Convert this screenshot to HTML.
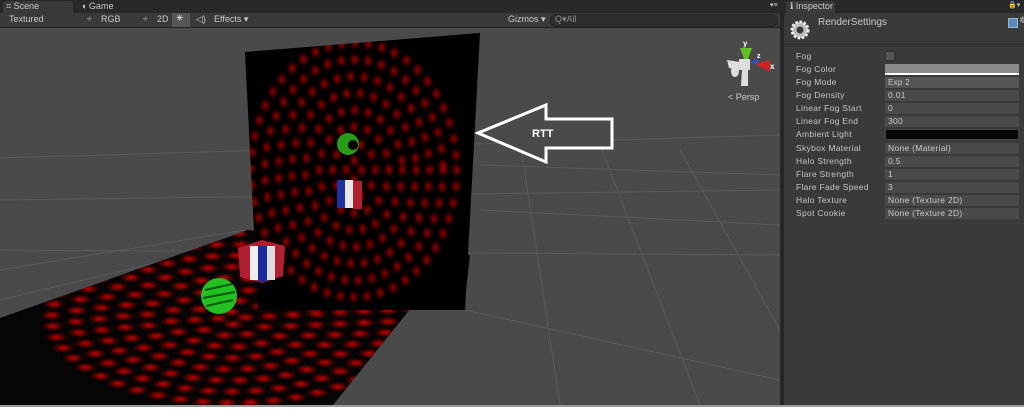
<!DOCTYPE html>
<html><head><style>
body{margin:0;width:1024px;height:420px;background:#fff;overflow:hidden;font-family:"Liberation Sans",sans-serif;position:relative}
.t{position:absolute;font-size:9px;color:#c8c8c8;white-space:nowrap}
#tabs{position:absolute;left:0;top:0;width:1024px;height:13px;background:#292929}
#tb{position:absolute;left:0;top:13px;width:782px;height:14px;background:#3a3a3a;border-bottom:1px solid #222}
#insp{position:absolute;left:782px;top:13px;width:242px;height:392px;background:#3a3a3a;border-left:2px solid #262626}
.lab{position:absolute;left:12px;font-size:8.5px;color:#c4c4c4;letter-spacing:.3px}
.fld{position:absolute;left:101px;width:134px;height:11px;background:#4a4a4a;font-size:8.5px;color:#c8c8c8;line-height:11px;padding-left:3px;box-sizing:border-box;letter-spacing:.3px}
</style></head><body>
<div id="tabs">
 <div style="position:absolute;left:3px;top:1px;width:70px;height:13px;background:#3a3a3a;border-radius:3px 3px 0 0"></div>
 <div class="t" style="left:6px;top:1px;font-size:9px">⌗ Scene</div>
 <div class="t" style="left:81px;top:1px;">◖ Game</div>
 <div style="position:absolute;left:786px;top:1px;width:49px;height:13px;background:#3a3a3a;border-radius:3px 3px 0 0"></div>
 <div class="t" style="left:790px;top:1px;">ℹ Inspector</div>
 <div class="t" style="left:770px;top:1px;font-size:7px">▾≡</div>
 <div class="t" style="left:1008px;top:1px;font-size:7px">🔒▾</div>
</div>
<div id="tb">
 <div class="t" style="left:9px;top:1px">Textured</div><div class="t" style="left:87px;top:1px">÷</div>
 <div class="t" style="left:101px;top:1px">RGB</div><div class="t" style="left:143px;top:1px">÷</div>
 <div class="t" style="left:157px;top:1px">2D</div>
 <div style="position:absolute;left:172px;top:0;width:18px;height:14px;background:#555"></div>
 <div class="t" style="left:176px;top:0px;color:#fff">✳</div>
 <div class="t" style="left:196px;top:1px">◁)</div>
 <div class="t" style="left:214px;top:1px">Effects ▾</div>
 <div class="t" style="left:508px;top:1px">Gizmos ▾</div>
 <div style="position:absolute;left:550px;top:1px;width:226px;height:11px;background:#2e2e2e;border-radius:6px;border:1px solid #252525"></div>
 <div class="t" style="left:555px;top:1px;color:#888">Q▾All</div>
</div>
<svg style="position:absolute;left:0;top:28px" width="780" height="377" viewBox="0 28 780 377">
<defs>
 <filter id="bl" x="-20%" y="-20%" width="140%" height="140%"><feGaussianBlur stdDeviation="2"/></filter>
 <clipPath id="fc"><polygon points="0,318 248,230 470,255 465,300 415,303 333,405 0,405"/></clipPath>
 <clipPath id="pc"><polygon points="245,52 480,33 465,310 258,310"/></clipPath>
 <g id="rings" fill="none" stroke="#ff0000" stroke-linecap="round" stroke-width="7">
  <circle r="8" stroke-dasharray="0 12.6"/>
  <circle r="22" stroke-dasharray="0 13.8"/>
  <circle r="36" stroke-dasharray="0 14.1"/>
  <circle r="50" stroke-dasharray="0 13.9"/>
  <circle r="64" stroke-dasharray="0 14.0"/>
  <circle r="78" stroke-dasharray="0 14.0"/>
  <circle r="92" stroke-dasharray="0 14.0"/>
  <circle r="106" stroke-dasharray="0 13.9"/>
 </g>
</defs>
<rect x="0" y="28" width="780" height="377" fill="#4a4a4a"/>
<g stroke="#5a5a5a" stroke-width="1" fill="none">
 <path d="M0 158 L780 135 M0 200 L780 190 M0 250 L780 255 M480 165 L780 175 M480 210 L780 225 M420 300 L780 380 M0 270 L245 230 M0 300 L230 245 M520 140 L560 405 M600 145 L700 405 M680 150 L780 330"/>
</g>
<!-- floor -->
<polygon points="0,318 248,230 470,255 465,300 415,303 333,405 0,405" fill="#050505"/>
<g clip-path="url(#fc)">
<g transform="translate(232,318) scale(1.7,0.8) rotate(-6)" filter="url(#bl)" opacity="0.85">
 <use href="#rings"/>
</g>
</g>
<!-- back panel -->
<polygon points="245,52 480,33 465,310 258,310" fill="#000"/>
<g clip-path="url(#pc)">
<g transform="translate(354,170) scale(0.97,1.2)" filter="url(#bl)" opacity="0.6">
 <use href="#rings"/>
</g>
</g>
<circle cx="348" cy="144" r="11" fill="#2a9a1a"/><circle cx="353" cy="145" r="5" fill="#000"/>
<rect x="337" y="180" width="8" height="28" fill="#2030a0"/><rect x="345" y="180" width="8" height="28" fill="#e8e8e8"/><rect x="353" y="181" width="9" height="28" fill="#b02030"/>
<!-- floor objects -->
<polygon points="238,248 262,240 285,246 283,276 262,283 240,277" fill="#b02030"/>
<rect x="250" y="246" width="8" height="34" fill="#eee"/><rect x="258" y="246" width="9" height="36" fill="#1a2a9a"/><rect x="267" y="246" width="8" height="34" fill="#ddd"/>
<circle cx="219" cy="296" r="18" fill="#22c020"/>
<g stroke="#0a5a0a" stroke-width="2"><path d="M205 290 L232 284 M203 298 L235 292 M206 306 L233 300"/></g>
<!-- arrow -->
<polygon points="478,133 546,105 546,119 612,119 612,148 546,148 546,162" fill="#4a4a4a" stroke="#fff" stroke-width="3" stroke-linejoin="miter"/>
<text x="532" y="137" fill="#fff" font-size="11" font-weight="bold" font-family="Liberation Sans">RTT</text>
<!-- gizmo -->
<polygon points="740,48 752,48 746,64" fill="#60c020"/>
<text x="743" y="46" fill="#fff" font-size="8" font-weight="bold">y</text>
<polygon points="755,64 770,60 770,72" fill="#d02020"/>
<text x="770" y="69" fill="#fff" font-size="8" font-weight="bold">x</text>
<polygon points="751,62 758,58 757,65" fill="#3050d0"/>
<text x="757" y="58" fill="#fff" font-size="7" font-weight="bold">z</text>
<rect x="739" y="59" width="11" height="11" fill="#ddd"/>
<polygon points="727,60 740,62 740,70 729,68" fill="#ddd"/>
<ellipse cx="735" cy="71" rx="4" ry="6" fill="#ddd"/>
<polygon points="742,70 748,70 748,86 741,86" fill="#ddd"/>
<text x="728" y="100" fill="#c8c8c8" font-size="9">&lt; Persp</text>
</svg>
<div style="position:absolute;left:780px;top:13px;width:2px;height:392px;background:#262626"></div>
<div id="insp">
 <svg style="position:absolute;left:6px;top:7px" width="20" height="20" viewBox="0 0 20 20"><circle cx="10" cy="10" r="8" fill="#bbb" stroke="#eee" stroke-width="3" stroke-dasharray="2.5 1.6"/><circle cx="10" cy="10" r="3.5" fill="#3a3a3a"/></svg>
 <div class="t" style="left:34px;top:4px;font-size:10px;color:#c8c8c8">RenderSettings</div>
 <div style="position:absolute;left:224px;top:5px;width:8px;height:8px;background:#5a8ac0;border:1px solid #9bc"></div>
 <div class="t" style="left:235px;top:2px">✲</div>
 <div style="position:absolute;left:0;top:31px;width:242px;height:1px;background:#2a2a2a"></div>
 <div class="lab" style="top:38px">Fog</div><div style="position:absolute;left:101px;top:38px;width:8px;height:8px;background:#555;border:1px solid #333;border-radius:2px"></div>
 <div class="lab" style="top:51px">Fog Color</div><div class="fld" style="top:51px;width:134px;background:#8a8a8a;border-bottom:2px solid #fff"></div>
 <div class="lab" style="top:64px">Fog Mode</div><div class="fld" style="top:64px;font-size:8px;background:#555">Exp 2</div>
 <div class="lab" style="top:77px">Fog Density</div><div class="fld" style="top:77px">0.01</div>
 <div class="lab" style="top:90px">Linear Fog Start</div><div class="fld" style="top:90px">0</div>
 <div class="lab" style="top:103px">Linear Fog End</div><div class="fld" style="top:103px">300</div>
 <div class="lab" style="top:116px">Ambient Light</div><div class="fld" style="top:116px;background:#05060a;border:1px solid #444"></div>
 <div class="lab" style="top:130px">Skybox Material</div><div class="fld" style="top:130px">None (Material)</div>
 <div class="lab" style="top:143px">Halo Strength</div><div class="fld" style="top:143px">0.5</div>
 <div class="lab" style="top:156px">Flare Strength</div><div class="fld" style="top:156px">1</div>
 <div class="lab" style="top:169px">Flare Fade Speed</div><div class="fld" style="top:169px">3</div>
 <div class="lab" style="top:182px">Halo Texture</div><div class="fld" style="top:182px">None (Texture 2D)</div>
 <div class="lab" style="top:195px">Spot Cookie</div><div class="fld" style="top:195px">None (Texture 2D)</div>
</div>
<div style="position:absolute;left:0;top:405px;width:1024px;height:2px;background:#999"></div>
</body></html>
